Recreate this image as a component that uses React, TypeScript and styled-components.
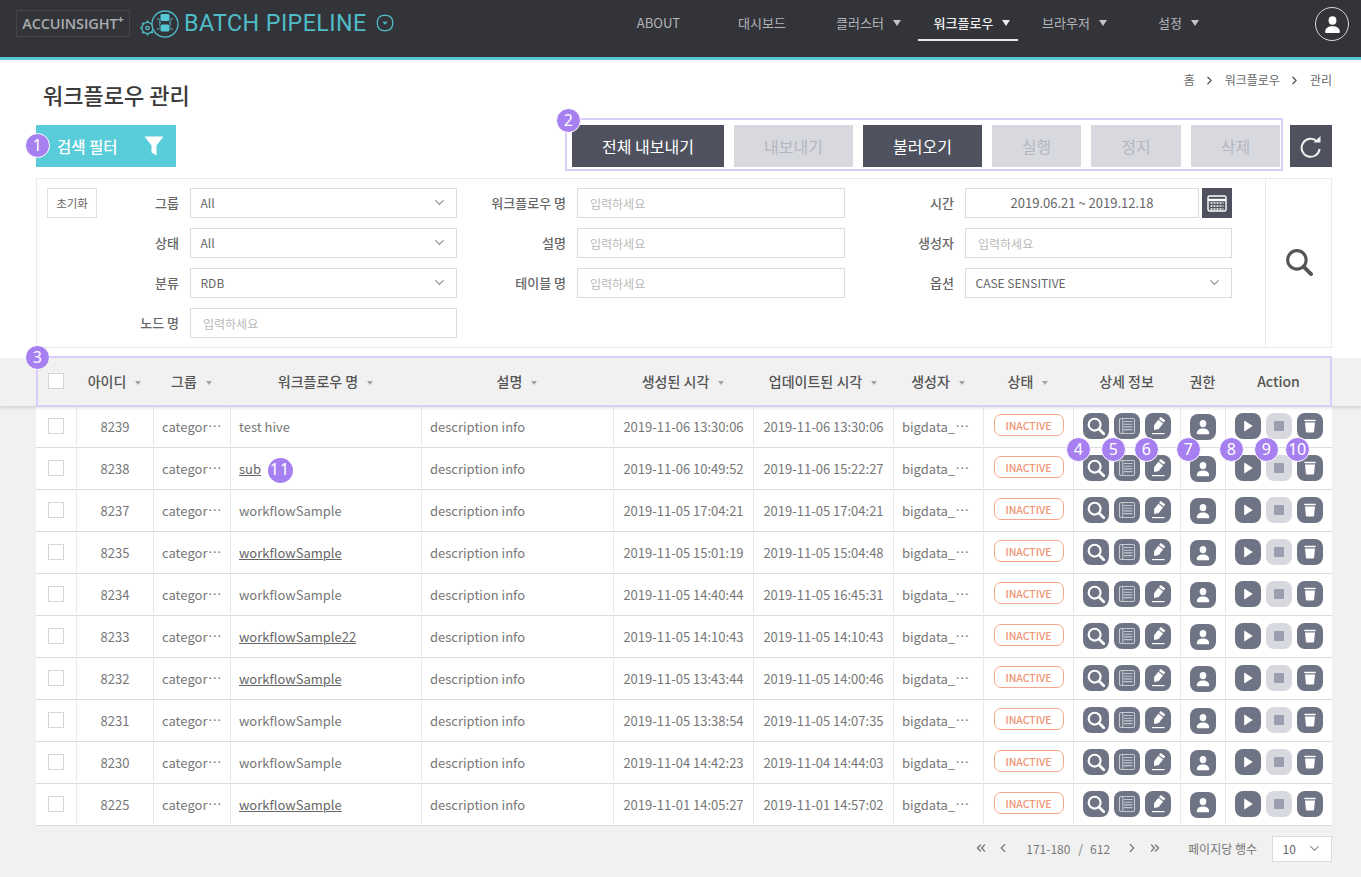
import React from "react";
import styled, { createGlobalStyle } from "styled-components";
import { ChevronDown, ChevronLeft, ChevronRight, ChevronsLeft, ChevronsRight } from "lucide-react";

const FONT = `"Noto Sans CJK KR", "Noto Sans", sans-serif`;
const COLS = "40px 77px 77px 191px 192px 140px 140px 90px 90px 107px 45px 107px";

const Global = createGlobalStyle`
  html, body { margin: 0; padding: 0; background: #fff; }
  body { font-family: ${FONT}; height: 877px; overflow: hidden; }
  * { box-sizing: border-box; }
`;

const Page = styled.div`
  position: relative;
  width: 1361px;
  height: 877px;
  display: flex;
  flex-direction: column;
  overflow: hidden;
`;

const TopBar = styled.header`
  height: 60px;
  flex: none;
  background: #32343a;
  border-bottom: 3px solid #55c8d3;
  display: flex;
  align-items: flex-start;
  padding: 0 12px 0 16px;
`;
const Brand = styled.div`
  height: 46px;
  display: flex;
  align-items: center;
`;
const Accu = styled.div`
  width: 114px;
  height: 27px;
  border: 1px solid #44464c;
  color: #a9abad;
  font-family: "Open Sans", sans-serif;
  font-size: 14.5px;
  font-weight: 600;
  line-height: 25px;
  text-align: center;
  letter-spacing: -0.1px;
  margin-right: 10px;
  sup { font-size: 11px; font-weight: 700; line-height: 0; }
`;
const BrandName = styled.div`
  font-family: Roboto, sans-serif;
  font-weight: 400;
  font-size: 23.3px;
  line-height: 30px;
  letter-spacing: 0.4px;
  color: #4fbcc7;
  margin: 0 9px 0 2px;
`;
const Nav = styled.nav`
  margin-left: auto;
  margin-right: 89px;
  display: flex;
  height: 41px;
`;
const NavItem = styled.div<{ $w: number; $pad?: number; $active?: boolean }>`
  width: ${(p) => p.$w}px;
  height: 41px;
  display: flex;
  align-items: center;
  justify-content: center;
  gap: 9px;
  padding: 5px 0 0 ${(p) => p.$pad ?? 0}px;
  font-size: 13px;
  font-weight: ${(p) => (p.$active ? 500 : 400)};
  color: ${(p) => (p.$active ? "#eeeeee" : "#b4b5b8")};
  border-bottom: 2px solid ${(p) => (p.$active ? "#e8e8e8" : "transparent")};
`;
const NavCaret = styled.i<{ $active?: boolean }>`
  width: 0;
  height: 0;
  border-left: 4px solid transparent;
  border-right: 4px solid transparent;
  border-top: 6px solid ${(p) => (p.$active ? "#eeeeee" : "#c4c5c8")};
  margin-top: 2px;
`;
const Avatar = styled.div`
  width: 34px;
  height: 34px;
  margin-top: 7px;
  border: 1.5px solid #d8d8d8;
  border-radius: 50%;
  display: flex;
  align-items: center;
  justify-content: center;
`;

const TitleRow = styled.div`
  display: flex;
  justify-content: space-between;
  align-items: flex-start;
  margin-top: 13px;
  height: 37px;
  padding: 0 29px 0 43px;
`;
const Title = styled.h1`
  margin: 6px 0 0;
  font-size: 22px;
  line-height: 30px;
  font-weight: 500;
  color: #3a3a3a;
`;
const Crumbs = styled.div`
  display: flex;
  align-items: center;
  gap: 8.5px;
  font-size: 12px;
  line-height: 14px;
  color: #666;
`;
const Toolbar = styled.div`
  margin: 15px 29px 0 36px;
  height: 42px;
  display: flex;
  align-items: center;
`;
const FilterToggle = styled.div`
  width: 140px;
  height: 42px;
  background: #58ccd8;
  color: #fff;
  font-size: 15.5px;
  font-weight: 500;
  display: flex;
  align-items: center;
  justify-content: space-between;
  padding: 0 12px 0 21px;
`;
const ActionGroup = styled.div`
  position: relative;
  margin-left: auto;
  display: flex;
  gap: 10px;
`;
const GroupOutline = styled.div`
  position: absolute;
  inset: -7px -3px -4px -7px;
  border: 2px solid #d9cdf9;
  pointer-events: none;
`;
const ActionButton = styled.div<{ $w: number; $on?: boolean }>`
  width: ${(p) => p.$w}px;
  height: 42px;
  background: ${(p) => (p.$on ? "#4f525e" : "#d8d9de")};
  color: ${(p) => (p.$on ? "#fff" : "#b4b6c0")};
  font-size: 16px;
  display: flex;
  align-items: center;
  justify-content: center;
`;
const RefreshButton = styled.div`
  width: 42px;
  height: 42px;
  margin-left: 10px;
  background: #4f525e;
  display: flex;
  align-items: center;
  justify-content: center;
`;

const FilterPanel = styled.section`
  margin: 11px 29px 0 36px;
  height: 170px;
  border: 1px solid #e8e8ee;
  display: flex;
`;
const FilterGrid = styled.div`
  display: grid;
  grid-template-columns: 50px 93px 267px 120px 268px 120px 267px;
  grid-auto-rows: 30px;
  row-gap: 10px;
  padding: 9px 0 0 10px;
  width: 1228px;
`;
const ResetButton = styled.div`
  width: 50px;
  height: 30px;
  border: 1px solid #e0e0e0;
  color: #666;
  font-size: 11.5px;
  display: flex;
  align-items: center;
  justify-content: center;
`;
const FieldLabel = styled.div`
  padding-right: 11px;
  text-align: right;
  font-size: 13px;
  font-weight: 500;
  line-height: 29px;
  color: #666;
  white-space: nowrap;
`;
const Blank = styled.div``;
const SelectBox = styled.div<{ $w?: number; $h?: number }>`
  width: ${(p) => (p.$w ? `${p.$w}px` : "100%")};
  height: ${(p) => p.$h ?? 30}px;
  border: 1px solid #dcdcdc;
  background: #fff;
  display: flex;
  align-items: center;
  justify-content: space-between;
  padding: 0 9px 2px 9.5px;
  font-size: 12px;
  color: #666;
`;
const TextField = styled.input`
  width: 100%;
  height: 30px;
  border: 1px solid #dcdcdc;
  padding: 0 12px;
  font-family: ${FONT};
  font-size: 12px;
  outline: none;
  &::placeholder { color: #b9b9b9; }
`;
const DateGroup = styled.div`
  display: flex;
  justify-content: space-between;
`;
const DateValue = styled.div`
  width: 234px;
  height: 30px;
  border: 1px solid #dcdcdc;
  font-size: 13px;
  color: #666;
  text-align: center;
  line-height: 27px;
`;
const CalendarButton = styled.div`
  width: 30px;
  height: 30px;
  background: #4f525e;
  display: flex;
  align-items: center;
  justify-content: center;
`;
const SearchPane = styled.div`
  flex: 1;
  border-left: 1px solid #e8e8ee;
  display: flex;
  align-items: center;
  justify-content: center;
  padding-bottom: 2px;
`;

const TableArea = styled.section`
  margin-top: 10px;
  flex: 1;
  background: #f1f1f1;
  display: flex;
  flex-direction: column;
`;
const HeadBand = styled.div`
  position: relative;
  z-index: 1;
  height: 48px;
  flex: none;
  background: #f1f1f1;
  box-shadow: 0 2px 3px rgba(0, 0, 0, 0.13);
  padding: 0 29px 0 36px;
`;
const HeadGrid = styled.div`
  position: relative;
  display: grid;
  grid-template-columns: ${COLS};
  height: 48px;
`;
const HeadOutline = styled.div`
  position: absolute;
  inset: -2px 0 -1px 0;
  border: 2px solid #d9cdf9;
  pointer-events: none;
`;
const HeadCell = styled.div`
  display: flex;
  align-items: center;
  justify-content: center;
  gap: 9px;
  padding-bottom: 2px;
  font-size: 14px;
  font-weight: 500;
  color: #555;
`;
const SortCaret = styled.i`
  width: 0;
  height: 0;
  margin-top: 3px;
  border-left: 3px solid transparent;
  border-right: 3px solid transparent;
  border-top: 4px solid #a6a6a6;
`;
const Check = styled.span`
  display: block;
  width: 16px;
  height: 16px;
  background: #fff;
  border: 1px solid #d5d5d5;
`;
const Rows = styled.div`
  margin: 0 29px 0 36px;
  background: #fff;
`;
const Row = styled.div`
  display: grid;
  grid-template-columns: ${COLS};
  height: 42px;
  padding-bottom: 1px;
  border-bottom: 1px solid #dcdcdc;
`;
const Cell = styled.div<{ $center?: boolean; $gap?: number; $lift?: boolean }>`
  display: flex;
  align-items: center;
  justify-content: ${(p) => (p.$center ? "center" : "flex-start")};
  gap: ${(p) => p.$gap ?? 0}px;
  padding: 0 ${(p) => (p.$center ? 0 : 8)}px ${(p) => (p.$lift ? 2 : 0)}px;
  border-left: 1px solid #e9e9e9;
  font-size: 13px;
  color: #777;
  white-space: nowrap;
  overflow: hidden;
  &:first-child { border-left: none; }
`;
const Dots = styled.span`
  font-family: "Noto Sans", sans-serif;
  letter-spacing: 1px;
  margin-left: 1px;
`;
const FlowLink = styled.span`
  text-decoration: underline;
  color: #666;
`;
const Pill = styled.div`
  width: 70px;
  height: 22px;
  border: 1px solid #f4a78c;
  border-radius: 7px;
  color: #ef9474;
  font-size: 10.5px;
  font-weight: 500;
  display: flex;
  align-items: center;
  justify-content: center;
`;
const IconButton = styled.div<{ $off?: boolean; $drop?: boolean }>`
  width: 26px;
  height: 26px;
  border-radius: 8px;
  margin-top: ${(p) => (p.$drop ? 2 : 0)}px;
  background: ${(p) => (p.$off ? "#d8d9de" : "#6f7485")};
  display: flex;
  align-items: center;
  justify-content: center;
`;
const StopMark = styled.i`
  width: 10px;
  height: 10px;
  background: #9a9eae;
  border-radius: 1px;
`;

const Footer = styled.div`
  height: 51px;
  padding: 10px 29px 0 0;
  display: flex;
  justify-content: flex-end;
  align-items: flex-start;
  color: #777;
`;
const Pager = styled.div`
  height: 26px;
  padding-bottom: 2px;
  display: flex;
  align-items: center;
  font-size: 12px;
  color: #777;
`;
const PageText = styled.span<{ $left: number }>`
  margin-left: ${(p) => p.$left}px;
  display: inline-flex;
`;
const RowsLabel = styled.span`
  margin: 0 15px 0 26px;
  font-size: 12px;
  color: #777;
`;

const Badge = styled.div<{ $x: number; $y: number; $plain?: boolean }>`
  position: absolute;
  left: ${(p) => p.$x - 12.5}px;
  top: ${(p) => p.$y - 12.5}px;
  z-index: 5;
  width: 25px;
  height: 25px;
  border-radius: 50%;
  background: #a67ff0;
  border: ${(p) => (p.$plain ? "none" : "1px solid #fff")};
  color: #fff;
  font-family: "Noto Sans", sans-serif;
  font-size: 16px;
  line-height: 23px;
  text-align: center;
  letter-spacing: ${(p) => (p.$plain ? "1px" : "-0.5px")};
`;

const Logo = () => (
  <svg width="42" height="30" viewBox="0 0 42 30" fill="none" stroke="#4fbcc7" strokeWidth="1.3">
    <circle cx="7.5" cy="20" r="5.6" />
    <circle cx="7.5" cy="20" r="1.7" />
    <path d="M7.5 12.6v1.8M7.5 25.6v1.8M.2 20H2M13 20h1.8M2.3 14.8l1.2 1.2M11.5 24l1.2 1.2M2.3 25.2l1.2-1.2" strokeWidth="1.7" />
    <circle cx="25" cy="16" r="13" fill="#32343a" />
    <path d="M17 11h3v10h-3M33 11h-3v10h3" stroke="#4fbcc7" strokeWidth="1.2" fill="none" />
    <rect x="20" y="5.5" width="10" height="8" rx="2" fill="#55c8d3" stroke="#32343a" strokeWidth="1" />
    <rect x="20" y="16" width="10" height="8" rx="2" fill="#55c8d3" stroke="#32343a" strokeWidth="1" />
  </svg>
);
const BrandDrop = () => (
  <svg width="18" height="18" viewBox="0 0 20 20" fill="none">
    <rect x="1.5" y="1.5" width="17" height="17" rx="7" stroke="#4fbcc7" strokeWidth="1.4" />
    <path d="M7 8.5h6l-3 3.5z" fill="#4fbcc7" />
  </svg>
);
const UserGlyph = ({ s = 16 }: { s?: number }) => (
  <svg width={s} height={s} viewBox="0 0 16 16" fill="#fff">
    <ellipse cx="8" cy="4.6" rx="3.3" ry="3.6" />
    <path d="M1.8 14.4c0-3.2 2.6-4.9 6.2-4.9s6.2 1.7 6.2 4.9c0 .5-.3.8-.8.8H2.6c-.5 0-.8-.3-.8-.8z" />
  </svg>
);
const FunnelGlyph = () => (
  <svg width="20" height="20" viewBox="0 0 20 20" fill="#fff">
    <path d="M0.5 0.5h19l-7 9v10l-5-3v-7z" />
  </svg>
);
const SearchGlyph = ({ s = 18, c = "#fff", w = 2.4 }: { s?: number; c?: string; w?: number }) => (
  <svg width={s} height={s} viewBox="0 0 20 20" fill="none" stroke={c} strokeWidth={w} strokeLinecap="round">
    <circle cx="8.5" cy="8.5" r="6.6" />
    <path d="M13.6 13.6l5 5" strokeWidth={w + 0.6} />
  </svg>
);
const ListGlyph = () => (
  <svg width="18" height="18" viewBox="0 0 18 18" fill="none" stroke="#c5c8d0" strokeWidth="1.1">
    <rect x="1.5" y="1.5" width="15" height="15" rx="1.5" />
    <path d="M6 4.5h8.5M6 7.2h8.5M6 9.9h8.5M6 12.6h8.5M4.8 2v14" />
  </svg>
);
const PencilGlyph = () => (
  <svg width="18" height="18" viewBox="0 0 18 18" fill="#fff">
    <g transform="rotate(38 9 8)">
      <rect x="6" y="0" width="6" height="2.6" rx="0.8" />
      <path d="M6 3.6h6v7l-3 3.6-3-3.6z" />
    </g>
    <path d="M3 16h12.5v1.2H3z" />
  </svg>
);
const PlayGlyph = () => (
  <svg width="14" height="14" viewBox="0 0 14 14" fill="#fff">
    <path d="M3.2 1.4l8.6 5.6-8.6 5.6z" />
  </svg>
);
const TrashGlyph = () => (
  <svg width="16" height="16" viewBox="0 0 16 16" fill="#fff">
    <rect x="2.2" y="1.8" width="11.6" height="1.5" rx="0.7" />
    <path d="M3 4.4h10l-.9 9.2a1 1 0 0 1-1 .9H4.9a1 1 0 0 1-1-.9z" />
  </svg>
);
const CalendarGlyph = () => (
  <svg width="20" height="18" viewBox="0 0 20 18" fill="none" stroke="#fff">
    <rect x="1" y="2" width="18" height="15" rx="1.5" strokeWidth="1.4" />
    <path d="M1 6h18" strokeWidth="2.4" />
    <path d="M3.5 9h13M3.5 12h13M3.5 15h13" strokeWidth="1.4" strokeDasharray="2 1" />
  </svg>
);
const RefreshGlyph = () => (
  <svg width="24" height="24" viewBox="0 0 24 24" fill="none">
    <path d="M18 7.4A9 9 0 1 0 20.6 15" stroke="#f2f2f2" strokeWidth="2" />
    <path d="M14.5 8.6h7V2z" fill="#f2f2f2" />
  </svg>
);

const navItems = [
  { t: "ABOUT", w: 101 },
  { t: "대시보드", w: 106 },
  { t: "클러스터", w: 103, pad: 4, caret: true },
  { t: "워크플로우", w: 100, pad: 8, caret: true, active: true },
  { t: "브라우저", w: 113, caret: true },
  { t: "설정", w: 95, caret: true },
];
const heads = [
  { t: "아이디", s: true },
  { t: "그룹", s: true },
  { t: "워크플로우 명", s: true },
  { t: "설명", s: true },
  { t: "생성된 시각", s: true },
  { t: "업데이트된 시각", s: true },
  { t: "생성자", s: true },
  { t: "상태", s: true },
  { t: "상세 정보" },
  { t: "권한" },
  { t: "Action" },
];
const rows = [
  ["8239", "test hive", false, "2019-11-06 13:30:06", "2019-11-06 13:30:06"],
  ["8238", "sub", true, "2019-11-06 10:49:52", "2019-11-06 15:22:27"],
  ["8237", "workflowSample", false, "2019-11-05 17:04:21", "2019-11-05 17:04:21"],
  ["8235", "workflowSample", true, "2019-11-05 15:01:19", "2019-11-05 15:04:48"],
  ["8234", "workflowSample", false, "2019-11-05 14:40:44", "2019-11-05 16:45:31"],
  ["8233", "workflowSample22", true, "2019-11-05 14:10:43", "2019-11-05 14:10:43"],
  ["8232", "workflowSample", true, "2019-11-05 13:43:44", "2019-11-05 14:00:46"],
  ["8231", "workflowSample", false, "2019-11-05 13:38:54", "2019-11-05 14:07:35"],
  ["8230", "workflowSample", false, "2019-11-04 14:42:23", "2019-11-04 14:44:03"],
  ["8225", "workflowSample", true, "2019-11-01 14:05:27", "2019-11-01 14:57:02"],
] as const;
const badges = [
  { n: "1", x: 37, y: 145 },
  { n: "2", x: 568, y: 120 },
  { n: "3", x: 37, y: 357 },
  { n: "4", x: 1078, y: 449 },
  { n: "5", x: 1113, y: 449 },
  { n: "6", x: 1146, y: 449 },
  { n: "7", x: 1188, y: 449 },
  { n: "8", x: 1231, y: 449 },
  { n: "9", x: 1266, y: 449 },
  { n: "10", x: 1297, y: 449 },
];

const Chevron = () => <ChevronDown size={15} color="#888" strokeWidth={1.8} />;

export default function App() {
  return (
    <Page>
      <Global />
      <TopBar>
        <Brand>
          <Accu>ACCUINSIGHT<sup>+</sup></Accu>
          <Logo />
          <BrandName>BATCH PIPELINE</BrandName>
          <BrandDrop />
        </Brand>
        <Nav>
          {navItems.map((n) => (
            <NavItem key={n.t} $w={n.w} $pad={n.pad} $active={n.active}>
              {n.t}
              {n.caret && <NavCaret $active={n.active} />}
            </NavItem>
          ))}
        </Nav>
        <Avatar>
          <UserGlyph s={19} />
        </Avatar>
      </TopBar>

      <TitleRow>
        <Title>워크플로우 관리</Title>
        <Crumbs>
          홈 <ChevronRight size={13} color="#555" strokeWidth={2.4} /> 워크플로우 <ChevronRight size={13} color="#555" strokeWidth={2.4} /> 관리
        </Crumbs>
      </TitleRow>

      <Toolbar>
        <FilterToggle>
          검색 필터
          <FunnelGlyph />
        </FilterToggle>
        <ActionGroup>
          <GroupOutline />
          <ActionButton $w={152} $on>전체 내보내기</ActionButton>
          <ActionButton $w={119}>내보내기</ActionButton>
          <ActionButton $w={119} $on>불러오기</ActionButton>
          <ActionButton $w={89}>실행</ActionButton>
          <ActionButton $w={90}>정지</ActionButton>
          <ActionButton $w={89}>삭제</ActionButton>
        </ActionGroup>
        <RefreshButton>
          <RefreshGlyph />
        </RefreshButton>
      </Toolbar>

      <FilterPanel>
        <FilterGrid>
          <ResetButton>초기화</ResetButton>
          <FieldLabel>그룹</FieldLabel>
          <SelectBox>All<Chevron /></SelectBox>
          <FieldLabel>워크플로우 명</FieldLabel>
          <TextField placeholder="입력하세요" />
          <FieldLabel>시간</FieldLabel>
          <DateGroup>
            <DateValue>2019.06.21 ~ 2019.12.18</DateValue>
            <CalendarButton><CalendarGlyph /></CalendarButton>
          </DateGroup>

          <Blank />
          <FieldLabel>상태</FieldLabel>
          <SelectBox>All<Chevron /></SelectBox>
          <FieldLabel>설명</FieldLabel>
          <TextField placeholder="입력하세요" />
          <FieldLabel>생성자</FieldLabel>
          <TextField placeholder="입력하세요" />

          <Blank />
          <FieldLabel>분류</FieldLabel>
          <SelectBox>RDB<Chevron /></SelectBox>
          <FieldLabel>테이블 명</FieldLabel>
          <TextField placeholder="입력하세요" />
          <FieldLabel>옵션</FieldLabel>
          <SelectBox>CASE SENSITIVE<Chevron /></SelectBox>

          <Blank />
          <FieldLabel>노드 명</FieldLabel>
          <TextField placeholder="입력하세요" />
        </FilterGrid>
        <SearchPane>
          <SearchGlyph s={28} c="#555" w={2.2} />
        </SearchPane>
      </FilterPanel>

      <TableArea>
        <HeadBand>
          <HeadGrid>
            <HeadOutline />
            <HeadCell><Check /></HeadCell>
            {heads.map((h) => (
              <HeadCell key={h.t}>
                {h.t}
                {h.s && <SortCaret />}
              </HeadCell>
            ))}
          </HeadGrid>
        </HeadBand>
        <Rows>
          {rows.map(([id, name, link, created, updated]) => (
            <Row key={id}>
              <Cell $center><Check /></Cell>
              <Cell $center>{id}</Cell>
              <Cell>categor<Dots>···</Dots></Cell>
              <Cell>{link ? <FlowLink>{name}</FlowLink> : name}</Cell>
              <Cell>description info</Cell>
              <Cell $center>{created}</Cell>
              <Cell $center>{updated}</Cell>
              <Cell>bigdata_<Dots>···</Dots></Cell>
              <Cell $center $lift><Pill>INACTIVE</Pill></Cell>
              <Cell $center $gap={5}>
                <IconButton><SearchGlyph /></IconButton>
                <IconButton><ListGlyph /></IconButton>
                <IconButton><PencilGlyph /></IconButton>
              </Cell>
              <Cell $center>
                <IconButton $drop><UserGlyph /></IconButton>
              </Cell>
              <Cell $center $gap={5}>
                <IconButton><PlayGlyph /></IconButton>
                <IconButton $off><StopMark /></IconButton>
                <IconButton><TrashGlyph /></IconButton>
              </Cell>
            </Row>
          ))}
        </Rows>
        <Footer>
          <Pager>
            <ChevronsLeft size={14} strokeWidth={2.4} />
            <PageText $left={8}><ChevronLeft size={14} strokeWidth={2} /></PageText>
            <PageText $left={16}>171-180</PageText>
            <PageText $left={8}>/</PageText>
            <PageText $left={7}>612</PageText>
            <PageText $left={15}><ChevronRight size={14} strokeWidth={2} /></PageText>
            <PageText $left={9}><ChevronsRight size={14} strokeWidth={2.4} /></PageText>
            <RowsLabel>페이지당 행수</RowsLabel>
          </Pager>
          <SelectBox $w={60} $h={26}>10<Chevron /></SelectBox>
        </Footer>
      </TableArea>

      {badges.map((b) => (
        <Badge key={b.n} $x={b.x} $y={b.y}>{b.n}</Badge>
      ))}
      <Badge $x={280} $y={470} $plain>11</Badge>
    </Page>
  );
}
